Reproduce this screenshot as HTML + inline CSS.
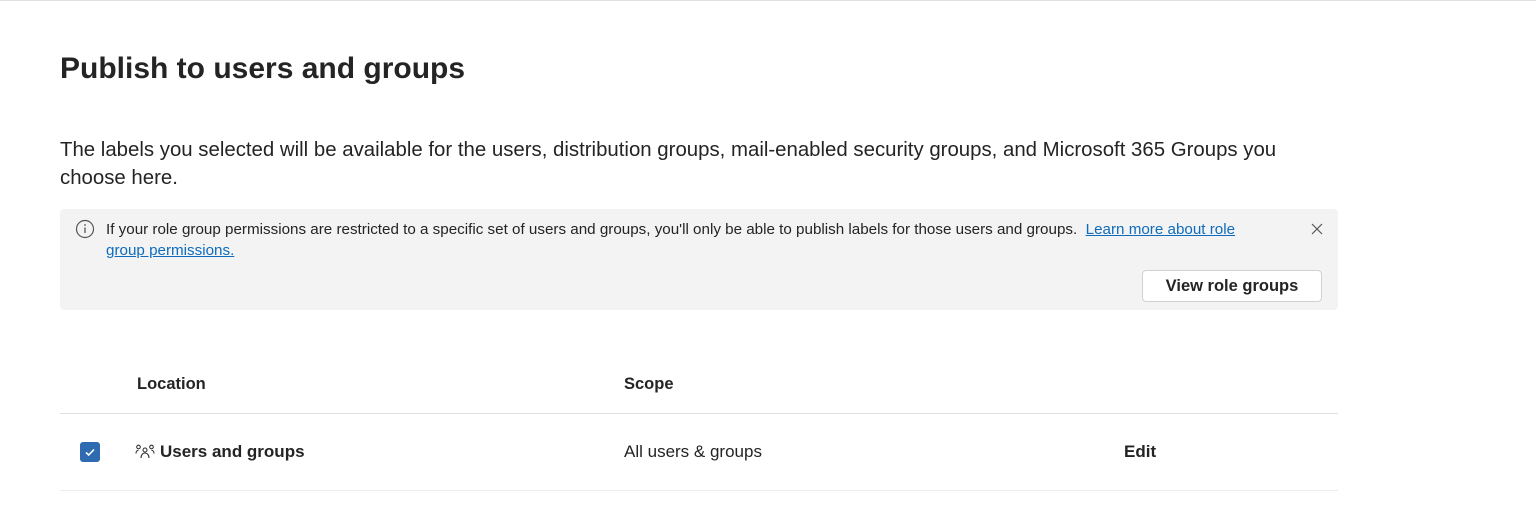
<!DOCTYPE html>
<html><head><style>
body{margin:0;width:1536px;height:514px;background:#fff;font-family:"Liberation Sans",sans-serif;color:#242424;position:relative;overflow:hidden;border-top:1px solid #e0e0e0;box-sizing:border-box}
.a{position:absolute;white-space:nowrap}
</style></head><body>
<div class="a" style="left:60px;top:51px;font-size:30px;font-weight:bold;">Publish to users and groups</div>
<div class="a" style="left:60px;top:135px;font-size:20.4px;line-height:28px;white-space:normal;width:1250px">The labels you selected will be available for the users, distribution groups, mail-enabled security groups, and Microsoft 365 Groups you choose here.</div>
<div class="a" style="left:60px;top:208px;width:1278px;height:101px;background:#f3f3f3;border-radius:4px"></div>
<svg class="a" style="left:75px;top:218px" width="20" height="20" viewBox="0 0 20 20"><circle cx="10" cy="10" r="8.5" fill="none" stroke="#555" stroke-width="1.2"/><line x1="10" y1="8.5" x2="10" y2="14" stroke="#555" stroke-width="1.3"/><circle cx="10" cy="6" r="0.9" fill="#555"/></svg>
<div class="a" style="left:106px;top:218px;font-size:15.2px;line-height:21px;white-space:normal;width:1160px;color:#242424">If your role group permissions are restricted to a specific set of users and groups, you'll only be able to publish labels for those users and groups.&nbsp;&nbsp;<span style="color:#0f6cbd;text-decoration:underline">Learn more about role group permissions.</span></div>
<svg class="a" style="left:1310px;top:221px" width="14" height="14" viewBox="0 0 14 14"><path d="M2 2L12 12M12 2L2 12" stroke="#555" stroke-width="1.2"/></svg>
<div class="a" style="left:1142px;top:269px;width:178px;height:30px;border:1px solid #d1d1d1;background:#fff;border-radius:4px;font-size:16.5px;font-weight:bold;text-align:center;line-height:30px;color:#242424">View role groups</div>
<div class="a" style="left:137px;top:374px;font-size:16.5px;font-weight:bold">Location</div>
<div class="a" style="left:624px;top:374px;font-size:16.5px;font-weight:bold">Scope</div>
<div class="a" style="left:60px;top:412px;width:1278px;height:1px;background:#e0e0e0"></div>
<div class="a" style="left:80px;top:441px;width:20px;height:20px;background:#2f6bb0;border-radius:3px"></div>
<svg class="a" style="left:80px;top:441px" width="20" height="20"><path d="M6 10.5L8.7 13L14 7.5" fill="none" stroke="#fff" stroke-width="1.6"/></svg>
<svg class="a" style="left:135px;top:443px" width="20" height="16" viewBox="0 0 20 16"><g fill="none" stroke="#333" stroke-width="1.1"><circle cx="3.5" cy="3" r="1.8"/><circle cx="16.5" cy="3" r="1.8"/><circle cx="10" cy="6" r="2"/><path d="M1 9.5c0-2 1.2-3.2 2.5-3.2M19 9.5c0-2-1.2-3.2-2.5-3.2M6 14c0-3 1.8-5 4-5s4 2 4 5"/></g></svg>
<div class="a" style="left:160px;top:441px;font-size:17px;font-weight:bold">Users and groups</div>
<div class="a" style="left:624px;top:441px;font-size:17px">All users &amp; groups</div>
<div class="a" style="left:1124px;top:441px;font-size:17px;font-weight:bold">Edit</div>
<div class="a" style="left:60px;top:489px;width:1278px;height:1px;background:#ececec"></div>
</body></html>
